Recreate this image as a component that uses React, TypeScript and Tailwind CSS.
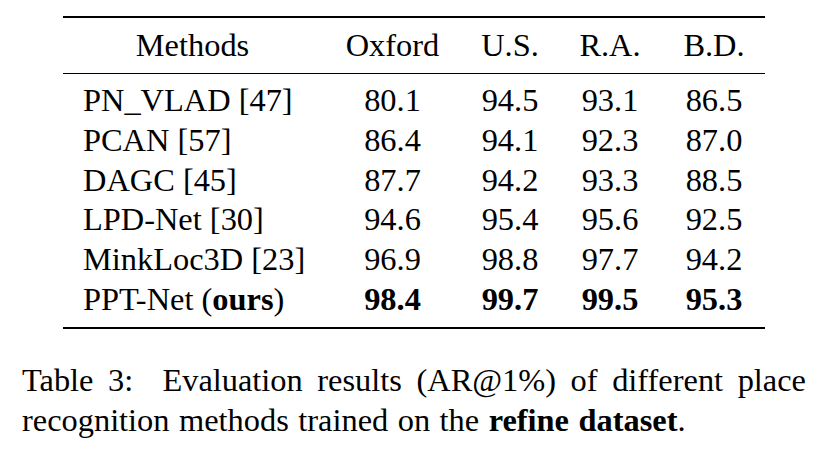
const cols = "grid grid-cols-[259px_141px_94px_106px_102px]";

type Row = { name: string; cite?: string; vals: string[]; ours?: boolean };

const rows: Row[] = [
  { name: "PN_VLAD", cite: "[47]", vals: ["80.1", "94.5", "93.1", "86.5"] },
  { name: "PCAN", cite: "[57]", vals: ["86.4", "94.1", "92.3", "87.0"] },
  { name: "DAGC", cite: "[45]", vals: ["87.7", "94.2", "93.3", "88.5"] },
  { name: "LPD-Net", cite: "[30]", vals: ["94.6", "95.4", "95.6", "92.5"] },
  { name: "MinkLoc3D", cite: "[23]", vals: ["96.9", "98.8", "97.7", "94.2"] },
  { name: "PPT-Net", vals: ["98.4", "99.7", "99.5", "95.3"], ours: true },
];

const headers = ["Oxford", "U.S.", "R.A.", "B.D."];

export default function App() {
  return (
    <div className="w-[813px] h-[452px] bg-white text-black font-['Liberation_Serif',serif] text-[32.4px] leading-[40px] overflow-hidden">
      <div className="ml-[63px] mt-[16px] w-[702px] border-t-2 border-b-2 border-black">
        {/* header */}
        <div className={`${cols} pt-[7px] pb-[8px] border-b border-black`}>
          <div className="text-center">Methods</div>
          {headers.map((h) => (
            <div key={h} className="text-center">
              {h}
            </div>
          ))}
        </div>

        {/* body */}
        <div className="pt-[7px] pb-[7px]">
          {rows.map((r) => (
            <div key={r.name} className={`${cols} leading-[39.8px]`}>
              <div className="pl-[20px] whitespace-nowrap">
                {r.name}{" "}
                {r.ours ? (
                  <>
                    (<span className="font-bold">ours</span>)
                  </>
                ) : (
                  r.cite
                )}
              </div>
              {r.vals.map((v, i) => (
                <div key={i} className={r.ours ? "text-center font-bold" : "text-center"}>
                  {v}
                </div>
              ))}
            </div>
          ))}
        </div>
      </div>

      <p className="ml-[22px] mt-[31px] w-[784px] text-justify">
        Table 3:&nbsp; Evaluation results (AR@1%) of different place{" "}
        <span className="[word-spacing:1.4px]">
          recognition methods trained on the <span className="font-bold">refine dataset</span>.
        </span>
      </p>
    </div>
  );
}
